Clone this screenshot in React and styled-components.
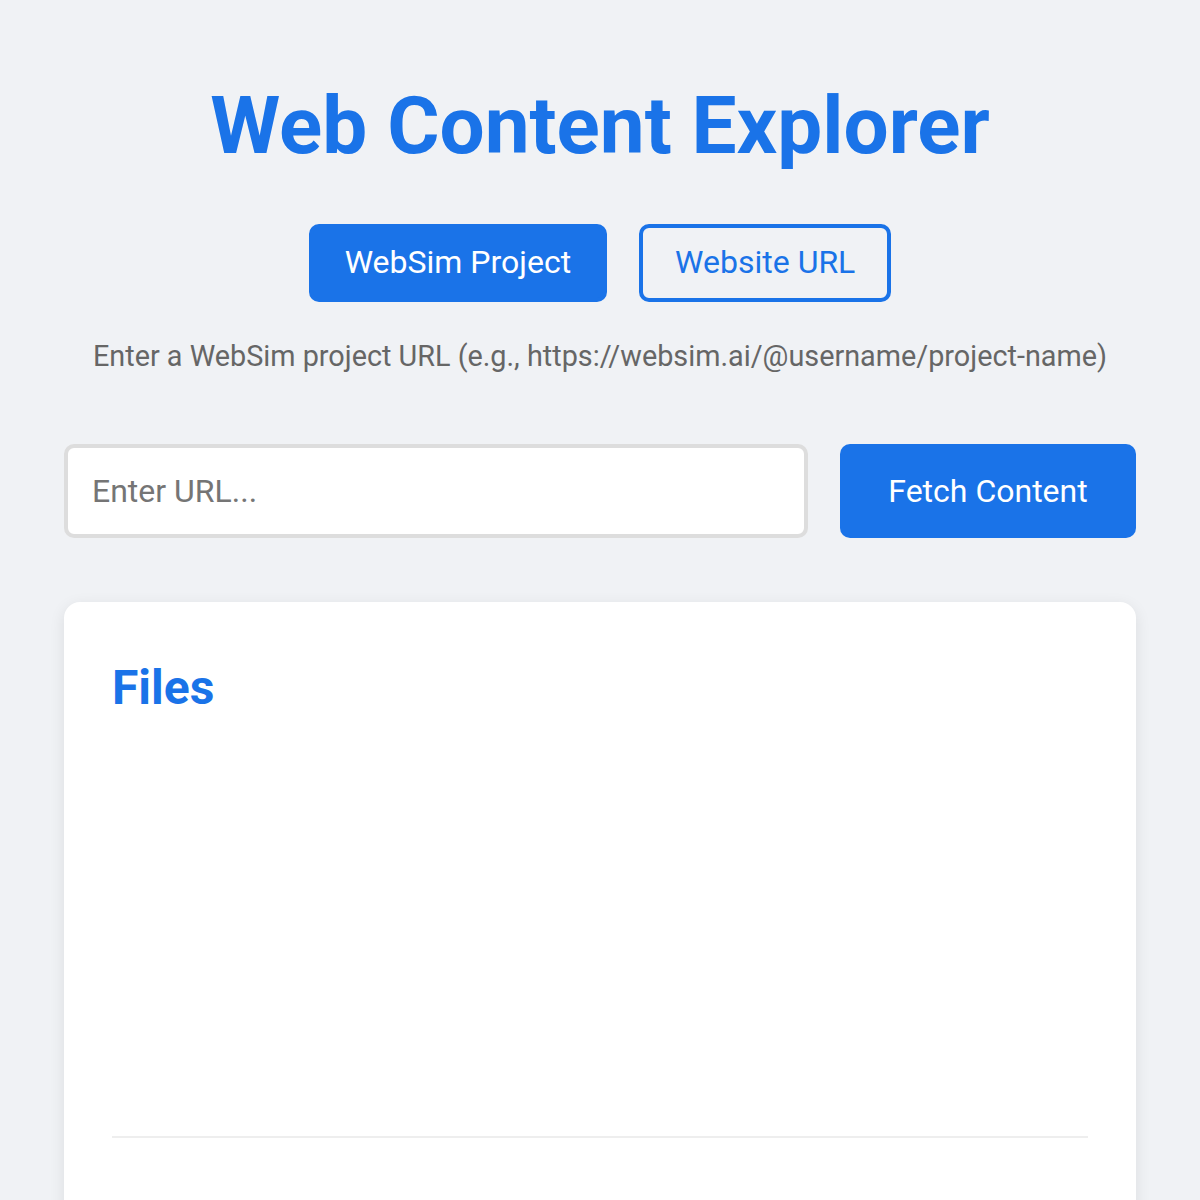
import React, { useState } from "react"
import styled, { createGlobalStyle } from "styled-components"

const GlobalStyle = createGlobalStyle`
  body {
    margin: 0;
    background-color: #f0f2f5;
    font-family: Roboto, "Liberation Sans", sans-serif;
    color: #333;
  }
  * {
    box-sizing: border-box;
  }
`

const Container = styled.div`
  max-width: 1200px;
  margin: 0 auto;
  padding: 79px 64px 0;
`

const Title = styled.h1`
  margin: 0;
  text-align: center;
  font-size: 80px;
  line-height: 94px;
  font-weight: 700;
  color: #1a73e8;
`

const ModeRow = styled.div`
  display: flex;
  justify-content: center;
  gap: 32px;
  margin-top: 51px;
`

const ModeButton = styled.button`
  padding: 16px 32px;
  font-family: inherit;
  font-size: 32px;
  line-height: 37.5px;
  border: 4px solid #1a73e8;
  border-radius: 10px;
  cursor: pointer;
  background: ${(p) => (p.active ? "#1a73e8" : "transparent")};
  color: ${(p) => (p.active ? "#fff" : "#1a73e8")};
`

const Hint = styled.p`
  margin: 37px 0 0;
  text-align: center;
  font-size: 28.8px;
  line-height: 34px;
  color: #666;
`

const SearchRow = styled.form`
  display: flex;
  gap: 32px;
  margin-top: 71px;
`

const UrlInput = styled.input`
  flex: 1;
  height: 94px;
  padding: 0 24px;
  font-family: inherit;
  font-size: 32px;
  color: #333;
  background: #fff;
  border: 4px solid #ddd;
  border-radius: 10px;
  outline: none;

  &::placeholder {
    color: #757575;
  }
`

const FetchButton = styled.button`
  flex-shrink: 0;
  width: 296px;
  height: 94px;
  font-family: inherit;
  font-size: 32px;
  color: #fff;
  background: #1a73e8;
  border: none;
  border-radius: 10px;
  cursor: pointer;
`

const Card = styled.section`
  margin-top: 64px;
  padding: 50px 48px 48px;
  background: #fff;
  border-radius: 16px;
  box-shadow: 0 4px 16px rgba(0, 0, 0, 0.09);
  min-height: 700px;
`

const CardTitle = styled.h2`
  margin: 0;
  font-size: 48px;
  line-height: 72px;
  font-weight: 700;
  color: #1a73e8;
`

const FileList = styled.ul`
  list-style: none;
  margin: 0;
  padding: 0;
  min-height: 414px;
  border-bottom: 2px solid #eee;
`

export default function App() {
  const [mode, setMode] = useState("websim")
  const [url, setUrl] = useState("")
  const [files] = useState([])

  const submitHandler = (e) => {
    e.preventDefault()
  }

  return (
    <>
      <GlobalStyle />
      <Container>
        <Title>Web Content Explorer</Title>
        <ModeRow>
          <ModeButton active={mode === "websim"} onClick={() => setMode("websim")}>
            WebSim Project
          </ModeButton>
          <ModeButton active={mode === "website"} onClick={() => setMode("website")}>
            Website URL
          </ModeButton>
        </ModeRow>
        <Hint>
          {mode === "websim"
            ? "Enter a WebSim project URL (e.g., https://websim.ai/@username/project-name)"
            : "Enter any website URL (e.g., https://example.com)"}
        </Hint>
        <SearchRow onSubmit={submitHandler}>
          <UrlInput
            placeholder="Enter URL..."
            value={url}
            onChange={(e) => setUrl(e.target.value)}
          />
          <FetchButton type="submit">Fetch Content</FetchButton>
        </SearchRow>
        <Card>
          <CardTitle>Files</CardTitle>
          <FileList>
            {files.map((f) => (
              <li key={f}>{f}</li>
            ))}
          </FileList>
        </Card>
      </Container>
    </>
  )
}
